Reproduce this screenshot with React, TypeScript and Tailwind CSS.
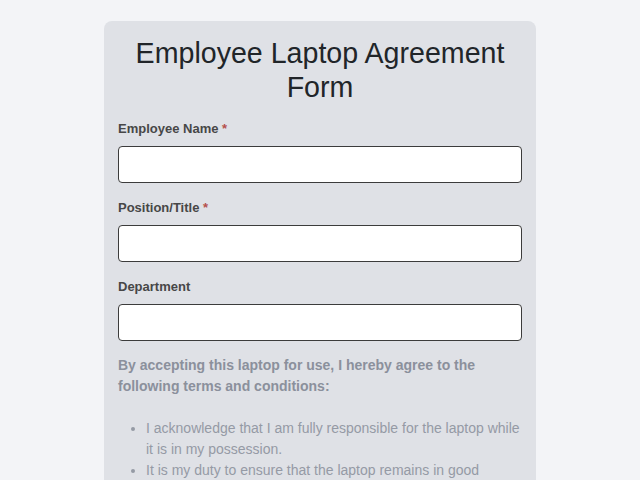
import React from 'react';

const fields = [
  { label: 'Employee Name', required: true },
  { label: 'Position/Title', required: true },
  { label: 'Department', required: false },
];

const terms = [
  'I acknowledge that I am fully responsible for the laptop while it is in my possession.',
  'It is my duty to ensure that the laptop remains in good condition and is returned in the same state in which it was issued.',
  'I will not install unauthorized software or alter the system configuration.',
];

export default function App() {
  return (
    <div className="min-h-screen bg-[#f3f4f7] pt-[21px] pb-8 font-['Liberation_Sans',Arial,sans-serif]">
      <div className="mx-auto w-[432px] rounded-lg bg-[#dfe1e6] px-[14px] pt-[15px] pb-[14px]">
        <h1 className="mb-[17px] text-center text-[28.6px] leading-[34px] text-[#212529]">
          Employee Laptop Agreement Form
        </h1>

        <form>
          {fields.map((f, i) => (
            <div key={f.label} className={i === fields.length - 1 ? 'mb-[14px]' : 'mb-[17px]'}>
              <label className="mb-[9px] block text-[13px] font-bold leading-4 text-[#474747]">
                {f.label}
                {f.required && <span className="text-[#b5504c]"> *</span>}
              </label>
              <input
                type="text"
                className="block h-[37px] w-full rounded-[4px] border border-[#3c3c3c] bg-white px-2 text-sm"
              />
            </div>
          ))}

          <p className="mb-[21px] text-sm font-bold leading-[21px] text-[#8b909c]">
            By accepting this laptop for use, I hereby agree to the following terms and conditions:
          </p>

          <ul className="list-disc pl-[28px] text-sm leading-[21px] text-[#959aa5]">
            {terms.map((t) => (
              <li key={t}>{t}</li>
            ))}
          </ul>
        </form>
      </div>
    </div>
  );
}
